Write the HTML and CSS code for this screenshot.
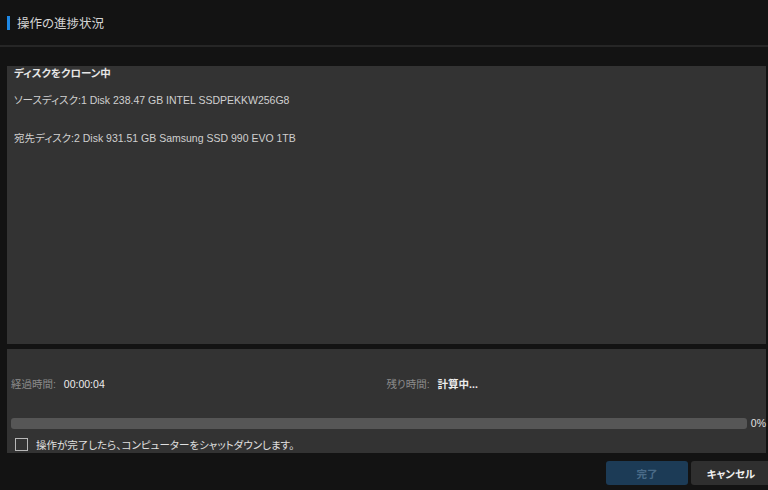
FILE: index.html
```html
<!DOCTYPE html>
<html lang="ja">
<head>
    <meta charset="UTF-8">
    <meta name="viewport" content="width=device-width, initial-scale=1.0">
    <title>操作の進捗状況</title>
    <link rel="stylesheet" href="styles.css">
</head>
<body>
    <!-- タイトル -->
    <header class="header">
        <span class="accent"></span>
        <h1 class="title">操作の進捗状況</h1>
    </header>

    <main class="content">
        <!-- ディスク情報 -->
        <section class="panel info-panel">
            <div class="info-head">ディスクをクローン中</div>
            <p class="info-line">ソースディスク:1 Disk 238.47 GB INTEL SSDPEKKW256G8</p>
            <p class="info-line dest">宛先ディスク:2 Disk 931.51 GB Samsung SSD 990 EVO 1TB</p>
        </section>

        <!-- 進捗 -->
        <section class="panel progress-panel">
            <div class="times">
                <div class="time-item">
                    <span class="time-label">経過時間:</span>
                    <span class="time-value">00:00:04</span>
                </div>
                <div class="time-item">
                    <span class="time-label">残り時間:</span>
                    <span class="time-value bold">計算中...</span>
                </div>
            </div>
            <div class="progress-row">
                <div class="progress-track"><div class="progress-fill" style="width: 0%"></div></div>
                <span class="percent">0%</span>
            </div>
            <label class="shutdown">
                <span class="checkbox"></span>
                操作が完了したら、コンピューターをシャットダウンします。
            </label>
        </section>
    </main>

    <footer class="footer">
        <button class="btn btn-done" disabled>完了</button>
        <button class="btn btn-cancel">キャンセル</button>
    </footer>
</body>
</html>
```

FILE: styles.css
```css
body {
    margin: 0;
    background: #131313;
    color: #d8d8d8;
    font: normal 10.5px "Liberation Sans", "Noto Sans CJK JP", sans-serif;
    font-feature-settings: "palt";
    width: 768px;
    height: 490px;
    overflow: hidden;
}

.header {
    display: flex;
    align-items: center;
    height: 47px;
    padding-left: 7px;
    border-bottom: 2px solid #262626;
    box-sizing: border-box;
}

.accent {
    width: 3px;
    height: 14px;
    background: #1e88e5;
    margin-right: 7px;
}

.title {
    margin: 0;
    font-size: 12.5px;
    font-weight: normal;
    color: #d6d6d6;
}

.content {
    padding: 19px 2px 0 7px;
}

.panel {
    background: #333333;
}

.info-panel {
    height: 278px;
    padding: 0 7px;
    box-sizing: border-box;
}

.info-head {
    line-height: 14px;
    font-weight: bold;
    color: #e6e6e6;
}

.info-line {
    margin: 13px 0 0;
    line-height: 14px;
    color: #d0d0d0;
}

.info-line.dest {
    margin-top: 24px;
}

.progress-panel {
    margin-top: 5px;
    height: 104px;
    padding: 0 4px;
    box-sizing: border-box;
}

.times {
    display: flex;
    padding-top: 27px;
    line-height: 16px;
}

.time-item {
    width: 382px;
}

.time-label {
    color: #8c8c8c;
    margin-right: 5px;
}

.time-value {
    color: #ececec;
}

.bold {
    font-weight: bold;
}

.progress-row {
    display: flex;
    align-items: center;
    margin-top: 25px;
}

.progress-track {
    flex: 1;
    height: 11px;
    background: #565656;
    border-radius: 3px;
    overflow: hidden;
}

.progress-fill {
    height: 100%;
    background: #1e88e5;
}

.percent {
    margin-left: 4px;
    margin-right: -4px;
    color: #e0e0e0;
}

.shutdown {
    display: flex;
    align-items: center;
    margin-top: 8px;
    padding-left: 4px;
    color: #e0e0e0;
}

.checkbox {
    width: 11px;
    height: 11px;
    border: 1px solid #b8b8b8;
    margin-right: 8px;
}

.footer {
    display: flex;
    justify-content: flex-end;
    gap: 3px;
    padding-top: 8px;
}

.btn {
    height: 24px;
    border: none;
    border-radius: 3px;
    font: bold 10.5px "Liberation Sans", "Noto Sans CJK JP", sans-serif;
    font-feature-settings: "palt";
}

.btn-done {
    width: 82px;
    background: #1c3b56;
    color: #4a6b88;
}

.btn-cancel {
    width: 80px;
    margin-right: -3px;
    background: #2f2f2f;
    color: #f0f0f0;
}
```
